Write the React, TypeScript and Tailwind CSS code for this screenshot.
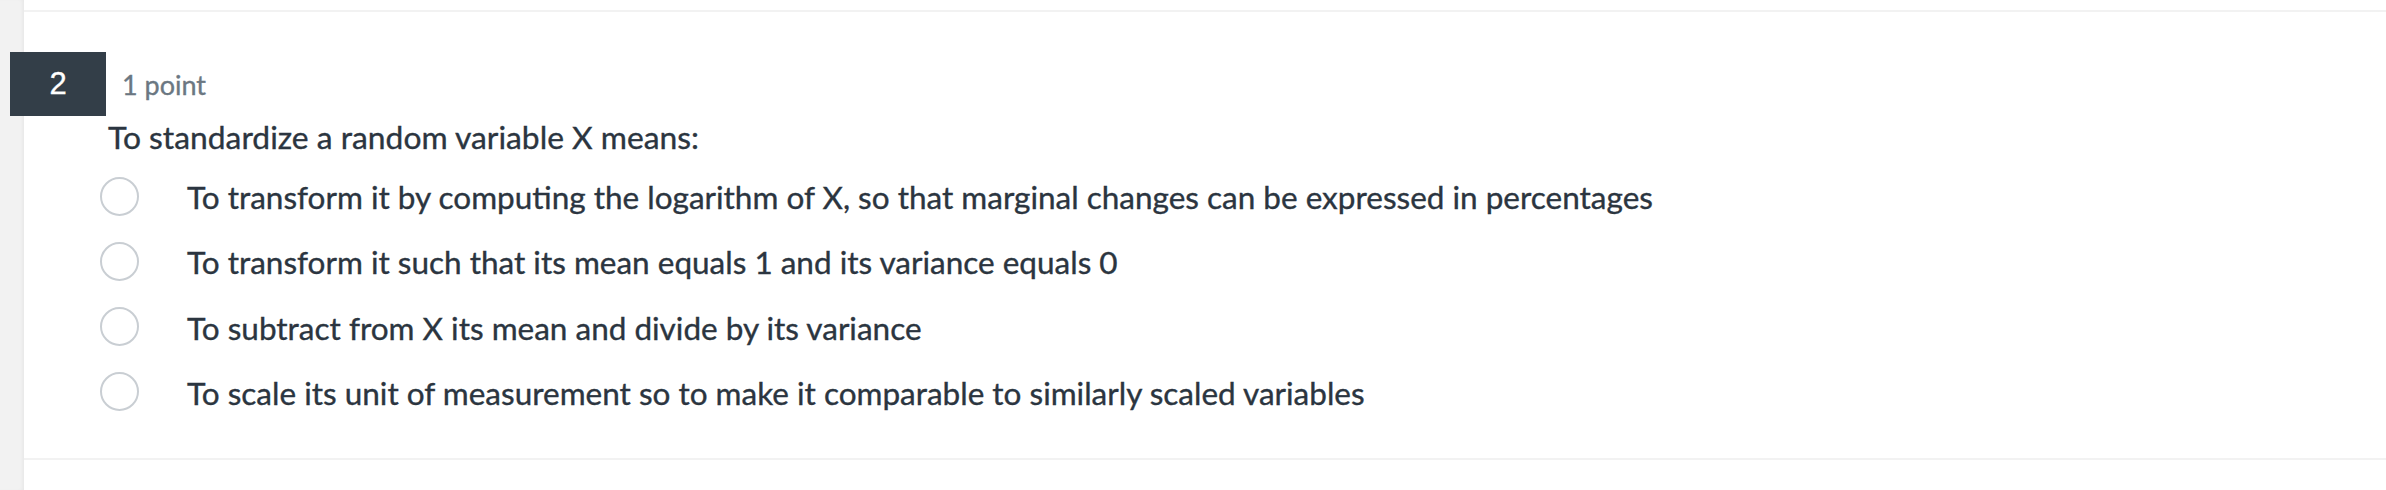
const OPTIONS = [
  "To transform it by computing the logarithm of X, so that marginal changes can be expressed in percentages",
  "To transform it such that its mean equals 1 and its variance equals 0",
  "To subtract from X its mean and divide by its variance",
  "To scale its unit of measurement so to make it comparable to similarly scaled variables",
];

export default function App() {
  return (
    <div className="flex h-[490px] w-full bg-white font-['Lato','Liberation_Sans',sans-serif] [-webkit-text-stroke:0.35px_currentColor]">
      <div className="w-[24px] shrink-0 bg-[#f2f2f2] shadow-[inset_-3px_0_4px_-2px_rgba(0,0,0,0.06)]" />
      <div className="flex flex-1 flex-col">
        <div className="h-[10px]" />
        <div className="border-t-2 border-[#f2f2f2]" />
        <section className="flex h-[446px] flex-col">
          <div className="mt-[40px] flex items-center">
            <div className="-ml-[14px] flex h-[64px] w-[96px] items-center justify-center bg-[#333e48] font-['Liberation_Sans',sans-serif] text-[31px] text-white">
              2
            </div>
            <span className="ml-[16px] pt-[2px] text-[27px] text-[#6b7782]">1 point</span>
          </div>
          <p className="ml-[84px] mt-[3px] text-[31.8px] leading-[36px] text-[#2b3540]">
            To standardize a random variable X means:
          </p>
          <div className="ml-[76px] mt-[21px] flex flex-col gap-[25.3px]">
            {OPTIONS.map((opt) => (
              <label key={opt} className="flex h-[40px] items-center">
                <span className="h-[39px] w-[39px] shrink-0 rounded-full border-2 border-[#c9ced3] [-webkit-text-stroke:0]" />
                <span className="ml-[48px] pt-[2px] text-[31.5px] leading-[36px] text-[#2b3540]">{opt}</span>
              </label>
            ))}
          </div>
        </section>
        <div className="border-t-2 border-[#f2f2f2]" />
      </div>
    </div>
  );
}
